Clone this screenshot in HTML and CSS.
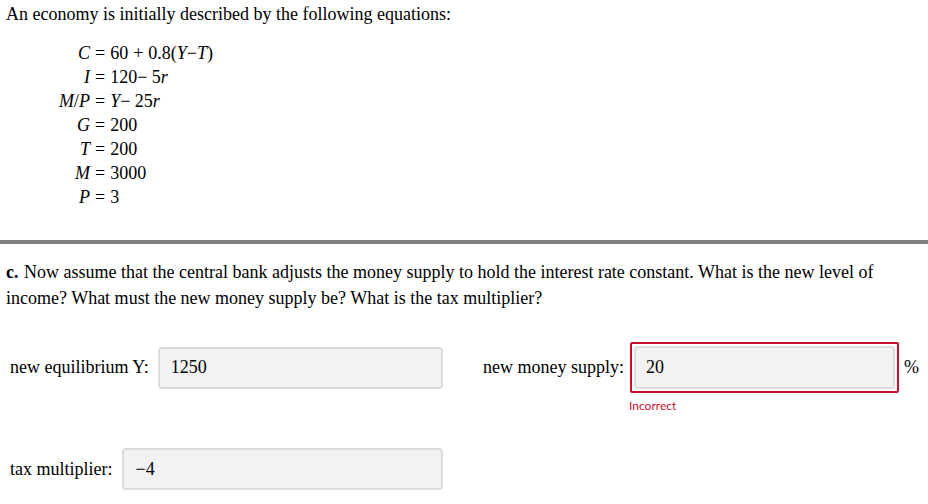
FILE: index.html
```html
<!DOCTYPE html>
<html>
<head>
<meta charset="utf-8">
<link rel="stylesheet" href="styles.css">
</head>
<body>
<p class="intro">An economy is initially described by the following equations:</p>
<div class="eqs">
  <div class="lhs"><i>C</i></div><div class="rhs"><span class="eq">=</span>60<span class="op">+</span>0.8(<i>Y</i>−<i>T</i>)</div>
  <div class="lhs"><i>I</i></div><div class="rhs"><span class="eq">=</span>120− 5<i>r</i></div>
  <div class="lhs"><i>M</i>/<i>P</i></div><div class="rhs"><span class="eq">=</span><i>Y</i>− 25<i>r</i></div>
  <div class="lhs"><i>G</i></div><div class="rhs"><span class="eq">=</span>200</div>
  <div class="lhs"><i>T</i></div><div class="rhs"><span class="eq">=</span>200</div>
  <div class="lhs"><i>M</i></div><div class="rhs"><span class="eq">=</span>3000</div>
  <div class="lhs"><i>P</i></div><div class="rhs"><span class="eq">=</span>3</div>
</div>
<div class="rule"></div>
<p class="question"><b class="part">c.</b> Now assume that the central bank adjusts the money supply to hold the interest rate constant. What is the new level of income? What must the new money supply be? What is the tax multiplier?</p>
<div class="answers">
  <div class="row first">
    <div class="group left">
      <span class="label">new equilibrium Y:</span>
      <div class="field">1250</div>
    </div>
    <div class="group right">
      <div class="line">
        <span class="label">new money supply:</span>
        <div class="wrong">
          <div class="field">20</div>
        </div>
        <span class="unit">%</span>
      </div>
      <div class="msg">Incorrect</div>
    </div>
  </div>
  <div class="row second">
    <div class="group left">
      <span class="label">tax multiplier:</span>
      <div class="field">−4</div>
    </div>
  </div>
</div>
</body>
</html>
```

FILE: styles.css
```css
html, body {
  margin: 0;
  padding: 0;
  background: #fff;
  color: #000;
  font-family: "Liberation Serif", "Times New Roman", serif;
  font-size: 18px;
}
.intro {
  margin: 0;
  padding: 4px 0 0 6px;
  line-height: 20px;
}
.eqs {
  display: grid;
  grid-template-columns: 95px auto;
  grid-auto-rows: 24px;
  line-height: 24px;
  margin-top: 17px;
  width: 320px;
}
.lhs {
  text-align: right;
  padding-right: 5px;
  white-space: nowrap;
}
.rhs {
  white-space: nowrap;
}
.eq {
  margin-right: 5px;
}
.op {
  margin: 0 5px;
}
.rule {
  height: 4px;
  background: #808080;
  margin-top: 31px;
}
.question {
  margin: 15px 0 0 0;
  padding-left: 6px;
  max-width: 885px;
  line-height: 26px;
}
.part {
  margin-right: 1px;
}
.answers {
  padding-left: 10px;
  margin-top: 31px;
}
.row {
  display: flex;
  align-items: flex-start;
}
.group.left {
  width: 433px;
  height: 51px;
  display: flex;
  align-items: center;
  gap: 9px;
}
.group.right {
  margin-left: 40px;
  display: flex;
  flex-direction: column;
}
.line {
  display: flex;
  align-items: center;
}
.label {
  white-space: nowrap;
}
.field {
  flex: 1;
  box-sizing: border-box;
  height: 42px;
  border: 2px solid #dcdcdc;
  border-radius: 4px;
  background: #f2f2f2;
  padding-left: 11px;
  display: flex;
  align-items: center;
}
.wrong {
  margin-left: 6px;
  width: 269px;
  height: 51px;
  box-sizing: border-box;
  border: 2px solid #c8102e;
  border-radius: 2px;
  padding: 2px;
  display: flex;
}
.wrong .field {
  height: 43px;
  padding-left: 10px;
}
.unit {
  margin-left: 5px;
}
.msg {
  margin-left: 146px;
  margin-top: 6px;
  font-family: Lato, "Open Sans", sans-serif;
  font-size: 12px;
  line-height: 14px;
  color: #c8102e;
}
.row.second {
  margin-top: 35px;
}
.row.second .group.left {
  height: 42px;
  gap: 10px;
}
```
